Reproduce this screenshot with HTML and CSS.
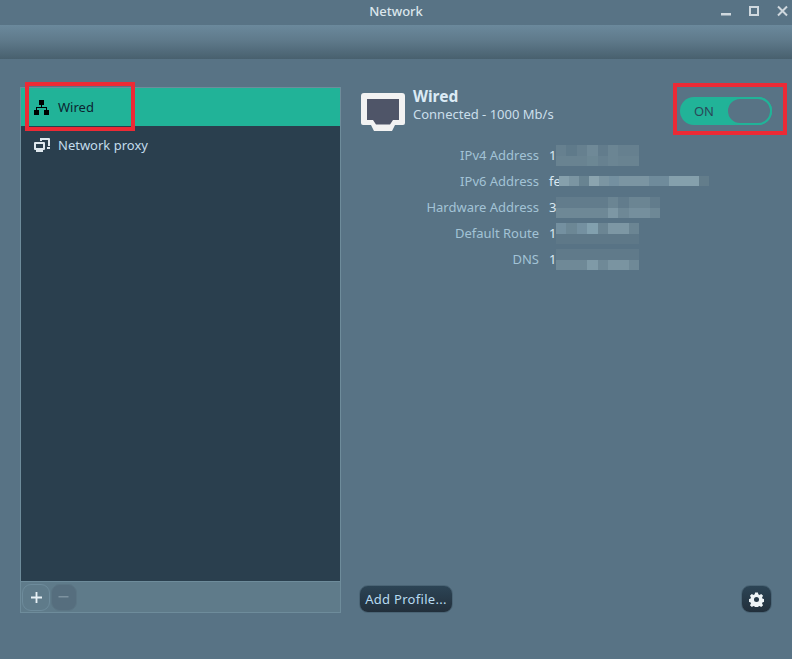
FILE: index.html
```html
<!DOCTYPE html>
<html lang="en">
<head>
<meta charset="utf-8">
<title>Network</title>
<link rel="stylesheet" href="styles.css">
</head>
<body>
<div class="window">
  <header class="titlebar">
    <span class="title">Network</span>
    <div class="wm-buttons">
      <svg class="wm" width="14" height="14" viewBox="0 0 14 14"><rect x="1" y="8" width="10" height="2.500" fill="#cfd8de"/></svg>
      <svg class="wm" width="14" height="14" viewBox="0 0 14 14"><rect x="2" y="2" width="8" height="8" fill="none" stroke="#cfd8de" stroke-width="2"/></svg>
      <svg class="wm" width="14" height="14" viewBox="0 0 14 14"><path d="M2 1.500l9 9M11 1.500l-9 9" fill="none" stroke="#cfd8de" stroke-width="2"/></svg>
    </div>
  </header>
  <div class="toolbar"></div>
  <main class="content">
    <section class="sidebar">
      <ul class="device-list">
        <li class="device selected">
          <svg class="device-icon" width="16" height="16" viewBox="0 0 16 16"><path d="M5 1h5v5H8v2h5v3h2v5h-5v-5h2V9H3v2h2v5H0v-5h2V8h5V6H5z" fill="#000"/></svg>
          <span class="device-name">Wired</span>
        </li>
        <li class="device">
          <svg class="device-icon" width="16" height="16" viewBox="0 0 16 16"><path d="M6 1h9a1 1 0 0 1 1 1v7h-2V3H8v1H6zM13 10h3v2h-3z" fill="#dfe8ee"/><path fill-rule="evenodd" d="M1 5h9a1 1 0 0 1 1 1v6a1 1 0 0 1-1 1H9v2H2v-2H1a1 1 0 0 1-1-1V6a1 1 0 0 1 1-1zM2 7v4h7V7z" fill="#dfe8ee"/></svg>
          <span class="device-name">Network proxy</span>
        </li>
      </ul>
      <div class="list-actions">
        <button class="mini-btn add" type="button">
          <svg width="11" height="11" viewBox="0 0 12 12"><path d="M5 0h2v5h5v2H7v5H5V7H0V5h5z" fill="#e8f1f6"/></svg>
        </button>
        <button class="mini-btn remove" type="button">
          <svg width="12" height="12" viewBox="0 0 12 12"><rect x="0.500" y="5" width="10" height="1.500" fill="#7d929f"/></svg>
        </button>
      </div>
    </section>
    <section class="details">
      <div class="summary">
        <svg class="ethernet" width="44" height="38" viewBox="0 0 44 38"><path d="M3 0h38a3 3 0 0 1 3 3v27a2 2 0 0 1-2 2H34l-3 6H13l-3-6H2a2 2 0 0 1-2-2V3a3 3 0 0 1 3-3z" fill="#f2f2f2"/><path d="M6 6h32v21H32l-3 4.500H15L12 27H6z" fill="#4f5568"/></svg>
        <div class="summary-text">
          <div class="summary-title">Wired</div>
          <div class="summary-sub">Connected - 1000 Mb/s</div>
        </div>
        <div class="switch">
          <span class="switch-on">ON</span>
          <span class="switch-knob"></span>
        </div>
      </div>
      <dl class="info">
        <dt>IPv4 Address</dt>
        <dd><span class="peek">1</span>
          <svg class="mosaic" width="83" height="21" viewBox="0 0 8 2" shape-rendering="crispEdges"><rect width="8" height="2" fill="#66808f"/><rect x="1" width="1" height="1" fill="#5f7a8a"/><rect x="3" width="1" height="2" fill="#6f8997"/><rect x="4" width="1" height="2" fill="#627c8c"/><rect x="5" width="1" height="2" fill="#6b8593"/><rect y="1" width="8" height="1" fill="#6b8593" opacity=".6"/></svg>
        </dd>
        <dt>IPv6 Address</dt>
        <dd><span class="peek">fe</span>
          <svg class="mosaic" width="155" height="10" viewBox="0 0 15 1" shape-rendering="crispEdges"><rect width="15" height="1" fill="#7b95a2"/><rect width="1" height="1" fill="#86a0ac"/><rect x="2" width="1" height="1" fill="#688391"/><rect x="3" width="1" height="1" fill="#8ba4af"/><rect x="5" width="1" height="1" fill="#7490a0"/><rect x="9" width="2" height="1" fill="#6f8b9b"/><rect x="11" width="3" height="1" fill="#85a0ac"/><rect x="14" width="1" height="1" fill="#637d8b"/></svg>
        </dd>
        <dt>Hardware Address</dt>
        <dd><span class="peek">3</span>
          <svg class="mosaic" width="104" height="21" viewBox="0 0 10 2" shape-rendering="crispEdges"><rect width="10" height="1" fill="#627c8c"/><rect y="1" width="10" height="1" fill="#6e8896"/><rect x="5" width="1" height="1" fill="#6b8593"/><rect x="7" width="2" height="1" fill="#6b8593"/><rect x="5" y="1" width="1" height="1" fill="#7d97a4"/><rect x="7" y="1" width="2" height="1" fill="#758f9d"/></svg>
        </dd>
        <dt>Default Route</dt>
        <dd><span class="peek">1</span>
          <svg class="mosaic" width="83" height="21" viewBox="0 0 8 2" shape-rendering="crispEdges"><rect width="8" height="1" fill="#7490a0"/><rect y="1" width="8" height="1" fill="#5e7888"/><rect x="1" width="1" height="1" fill="#6c8795"/><rect x="3" width="1" height="1" fill="#82a0ae"/><rect x="4" width="1" height="1" fill="#6b8593"/><rect x="5" width="2" height="1" fill="#7d97a4"/><rect x="7" width="1" height="1" fill="#6b8593"/></svg>
        </dd>
        <dt>DNS</dt>
        <dd><span class="peek">1</span>
          <svg class="mosaic" width="83" height="21" viewBox="0 0 8 2" shape-rendering="crispEdges"><rect width="8" height="1" fill="#607a8a"/><rect y="1" width="8" height="1" fill="#6f8997"/><rect x="3" y="1" width="1" height="1" fill="#7f9aa7"/><rect x="5" y="1" width="2" height="1" fill="#7a94a1"/></svg>
        </dd>
      </dl>
      <div class="detail-actions">
        <button class="dark-btn profile" type="button">Add Profile...</button>
        <button class="dark-btn gear" type="button">
          <svg width="15" height="15" viewBox="0 0 16 16"><path fill-rule="evenodd" d="M6.500 0.500h3l.4 2 1.300.6 1.800-1.100 2 2-1.100 1.800.6 1.300 2 .4v3l-2 .4-.6 1.300 1.100 1.800-2 2-1.800-1.100-1.300.6-.4 2h-3l-.4-2-1.300-.6-1.800 1.100-2-2 1.100-1.800-.6-1.300-2-.4v-3l2-.4.600-1.300-1.100-1.800 2-2 1.800 1.100 1.300-.6zM8 5.300a2.700 2.700 0 1 0 0 5.400 2.700 2.700 0 0 0 0-5.400z" fill="#eef3f6"/></svg>
        </button>
      </div>
    </section>
  </main>
  <div class="mark mark-row"></div>
  <div class="mark mark-switch"></div>
</div>
</body>
</html>
```
FILE: styles.css
```css
* { box-sizing: border-box; }
html, body { margin: 0; padding: 0; }
body { font-family: "Noto Sans", "Open Sans", sans-serif; font-size: 13px; background: #587385; }
.window { position: relative; width: 792px; height: 659px; background: #587385; overflow: hidden; display: flex; flex-direction: column; }
.titlebar { height: 25px; display: flex; align-items: center; justify-content: center; position: relative; }
.title { color: #dbe6ec; font-weight: 500; font-size: 13px; margin-top: -4px; }
.wm-buttons { position: absolute; right: 2px; top: 5px; display: flex; gap: 14px; }
.wm { display: block; }
.toolbar { height: 34px; background: linear-gradient(#6b899c, #5f7a8b 45%, #48606e); }
.content { flex: 1; display: flex; padding: 28px 20px 46px; }
.sidebar { width: 321px; display: flex; flex-direction: column; border: 1px solid #6e8c9b; }
.device-list { list-style: none; margin: 0; padding: 0; flex: 1; background: #2a3f4e; }
.device { height: 38px; display: flex; align-items: center; padding-left: 13px; gap: 8px; color: #c3dcec; }
.device.selected { background: #21b398; color: #0c2430; }
.device-icon { display: block; flex: none; }
.device-name { line-height: 16px; }
.list-actions { height: 31px; background: #5f7b8a; border-top: 1px solid #6e8c9b; display: flex; align-items: center; padding: 0 1px; gap: 1px; }
.mini-btn { height: 27px; padding: 0; border-radius: 9px; display: flex; align-items: center; justify-content: center; background: none; }
.mini-btn.add { width: 28px; border: 1px solid #6d8b9b; }
.mini-btn.remove { width: 26px; border: 1px solid #5b7584; background: #566e7e; }
.details { flex: 1; padding-left: 18px; display: flex; flex-direction: column; }
.summary { display: flex; align-items: flex-start; padding: 6px 0 0 2px; height: 45px; }
.ethernet { display: block; flex: none; }
.summary-text { margin-left: 8px; margin-top: -7px; flex: 1; }
.summary-title { color: #dcebf5; font-weight: 700; font-size: 15.5px; line-height: 20px; }
.summary-sub { color: #cbdfeb; line-height: 17px; }
.switch { width: 92px; height: 28px; margin: 4px 0 0; border-radius: 14px; background: #21b398; display: flex; align-items: center; position: relative; }
.switch-on { width: 46px; padding-left: 2px; text-align: center; color: #2a4858; }
.switch-knob { width: 46px; height: 28px; border-radius: 14px; border: 2px solid #21b398; background: #587385; }
.info { margin: 10px 0 0; display: grid; grid-template-columns: 180px 1fr; column-gap: 10px; grid-auto-rows: 26px; align-items: center; }
.info dt { text-align: right; color: #a3c3d6; }
.info dd { margin: 0; display: flex; align-items: center; color: #dbe9f2; line-height: 26px; }
.peek { width: 7px; flex: none; white-space: nowrap; }
.mosaic { display: block; flex: none; position: relative; }
.detail-actions { margin-top: auto; display: flex; justify-content: space-between; align-items: flex-end; }
.dark-btn { height: 28px; border: 1px solid #4a6475; border-radius: 9px; background: linear-gradient(#2c4455, #222f3b); color: #b8dbf0; font: inherit; padding: 0; display: flex; align-items: center; justify-content: center; }
.profile { width: 94px; letter-spacing: .3px; }
.gear { width: 31px; }
.mark { position: absolute; border: 4px solid #ec2a35; }
.mark-row { left: 25px; top: 82px; width: 110px; height: 49px; }
.mark-switch { left: 673px; top: 83px; width: 114px; height: 52px; }
```
